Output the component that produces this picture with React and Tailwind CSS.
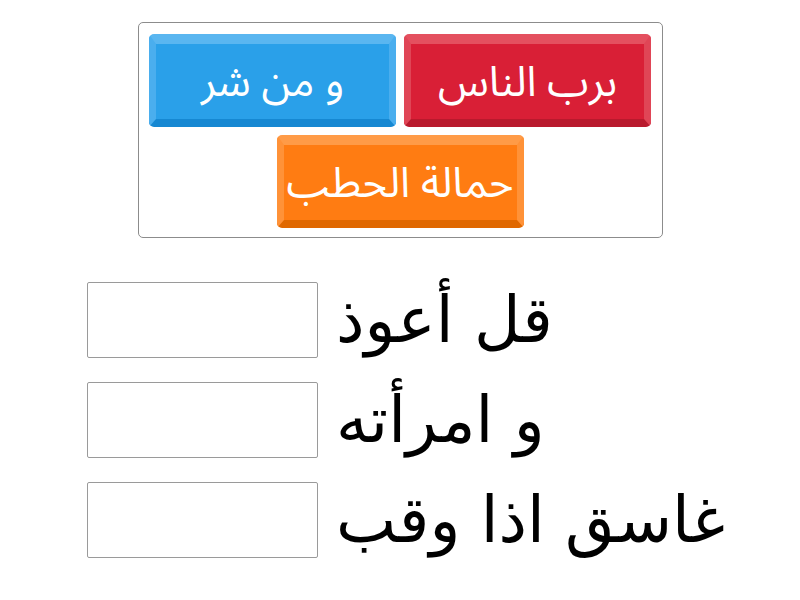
import React from "react";

const words = [
  { text: "برب الناس", cls: "bg-[#d91f36] border-t-[#e4505f] border-x-[#e04556] border-b-[#b91a2d]" },
  { text: "و من شر", cls: "bg-[#2aa0e9] border-t-[#5ab6f0] border-x-[#4aaeee] border-b-[#1688d2]" },
  { text: "حمالة الحطب", cls: "bg-[#ff7c12] border-t-[#ff9b47] border-x-[#ff9238] border-b-[#e06800]" },
];

const rows = ["قل أعوذ", "و امرأته", "غاسق اذا وقب"];

export default function App() {
  return (
    <div className="w-[800px] h-[600px] bg-white">
      <div className="pt-[22px] flex justify-center">
        <div className="w-[525px] h-[216px] border border-[#8c8c8c] rounded-[5px] px-[10px] pt-[11px]">
          <div dir="rtl" className="flex flex-wrap justify-center gap-[8px]">
            {words.map((w, i) => (
              <div
                key={i}
                className={
                  "w-[247px] h-[93px] rounded-[5px] border-t-[10px] border-x-[7px] border-b-[8px] flex items-center justify-center text-white text-[42px] leading-none font-['Noto_Sans_Arabic',sans-serif] " +
                  w.cls
                }
              >
                <span className="mt-[2px]">{w.text}</span>
              </div>
            ))}
          </div>
        </div>
      </div>
      <div className="mt-[44px] pl-[87px] flex flex-col gap-[24px]">
        {rows.map((r, i) => (
          <div key={i} className="flex items-center gap-[18px]">
            <div className="w-[231px] h-[76px] border border-[#9a9a9a] rounded-[2px] shrink-0" />
            <div dir="rtl" className="text-black text-[64px] leading-none font-['DejaVu_Sans',sans-serif]">
              {r}
            </div>
          </div>
        ))}
      </div>
    </div>
  );
}
